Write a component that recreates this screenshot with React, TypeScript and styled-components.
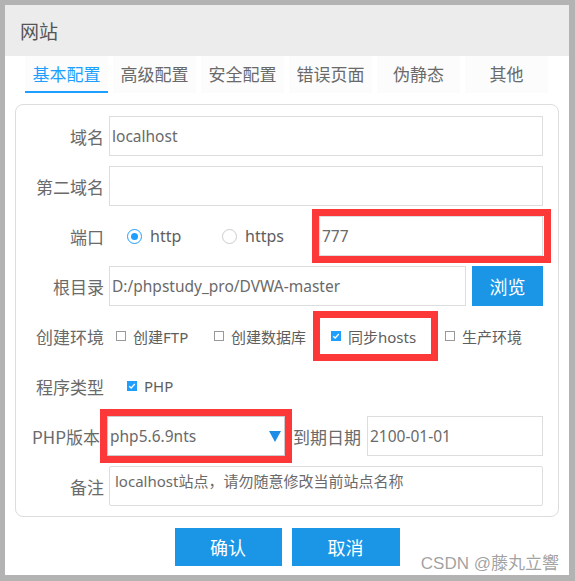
import React from "react";
import styled, { createGlobalStyle } from "styled-components";

const GlobalStyle = createGlobalStyle`
  html, body {
    margin: 0;
    padding: 0;
    background: #b3b3b3;
  }
  body {
    font-family: "Noto Sans", "Noto Sans CJK SC", sans-serif;
    color: #666;
  }
  * {
    box-sizing: border-box;
  }
`;

const tabs = ["基本配置", "高级配置", "安全配置", "错误页面", "伪静态", "其他"];

function Checkbox({ checked }: { checked?: boolean }) {
  return (
    <CheckBox $checked={checked}>
      {checked && (
        <svg width="8" height="8" viewBox="0 0 8 8">
          <path d="M1.2 4.2 L3.2 6 L6.8 2" fill="none" stroke="#fff" strokeWidth="1.3" />
        </svg>
      )}
    </CheckBox>
  );
}

function App() {
  return (
    <>
      <GlobalStyle />
      <Dialog>
        <TitleBar>网站</TitleBar>
        <TabBar>
          {tabs.map((t, i) => (
            <Tab key={t}>
              <TabInner $active={i === 0}>{t}</TabInner>
            </Tab>
          ))}
        </TabBar>

        <Panel>
          <Row>
            <Label>域名</Label>
            <Input>localhost</Input>
          </Row>
          <Row>
            <Label>第二域名</Label>
            <Input />
          </Row>
          <Row>
            <Label>端口</Label>
            <Controls $indent={18}>
              <RadioOption>
                <Radio $checked />
                http
              </RadioOption>
              <RadioOption>
                <Radio />
                https
              </RadioOption>
              <Marked $grow>
                <Input>777</Input>
                <Highlight $t={-7} $r={-8} $b={-7} $l={-7} />
              </Marked>
            </Controls>
          </Row>
          <Row>
            <Label>根目录</Label>
            <Controls>
              <Input $grow>D:/phpstudy_pro/DVWA-master</Input>
              <BlueButton $w={71}>浏览</BlueButton>
            </Controls>
          </Row>
          <Row>
            <Label>创建环境</Label>
            <Controls $indent={7}>
              <CheckOption $w={98}>
                <Checkbox />
                创建FTP
              </CheckOption>
              <CheckOption $w={117}>
                <Checkbox />
                创建数据库
              </CheckOption>
              <Marked>
                <CheckOption $w={114}>
                  <Checkbox checked />
                  同步hosts
                </CheckOption>
                <Highlight $t={-5} $r={7} $b={-5} $l={-18} />
              </Marked>
              <CheckOption>
                <Checkbox />
                生产环境
              </CheckOption>
            </Controls>
          </Row>
          <Row>
            <Label>程序类型</Label>
            <Controls $indent={18}>
              <CheckOption>
                <Checkbox checked />
                PHP
              </CheckOption>
            </Controls>
          </Row>
          <Row>
            <Label $pad={4}>PHP版本</Label>
            <Controls $indent={-2}>
              <Marked>
                <Select>
                  php5.6.9nts
                  <svg width="12" height="11" viewBox="0 0 12 11">
                    <path d="M0 0 H12 L6 11 Z" fill="#1c8ee6" />
                  </svg>
                </Select>
                <Highlight $t={-7} $r={-7} $b={-7} $l={-7} />
              </Marked>
              <InlineLabel>到期日期</InlineLabel>
              <Input $grow>2100-01-01</Input>
            </Controls>
          </Row>
          <Row>
            <Label>备注</Label>
            <TextArea>localhost站点，请勿随意修改当前站点名称</TextArea>
          </Row>
        </Panel>

        <Footer>
          <BlueButton $w={107} $h={38}>确认</BlueButton>
          <BlueButton $w={108} $h={38}>取消</BlueButton>
        </Footer>
        <Watermark>CSDN @藤丸立響</Watermark>
      </Dialog>
    </>
  );
}

const Dialog = styled.div`
  position: relative;
  margin: 5px 0 0 5px;
  width: 564px;
  height: 570px;
  background: #fff;
  display: flex;
  flex-direction: column;
`;

const TitleBar = styled.div`
  height: 51px;
  background: #ececec;
  padding-left: 15px;
  display: flex;
  align-items: center;
  font-size: 19px;
  color: #555;
  font-family: "Noto Sans CJK SC", sans-serif;
`;

const TabBar = styled.div`
  display: flex;
  padding-left: 17px;
  height: 37px;
`;

const Tab = styled.div`
  width: 88px;
  display: flex;
  padding: 0 2px 0 3px;
`;

const TabInner = styled.div<{ $active?: boolean }>`
  flex: 1;
  display: flex;
  align-items: center;
  justify-content: center;
  background: #fcfcfc;
  font-size: 17px;
  font-family: "Noto Sans CJK SC", sans-serif;
  color: ${(p) => (p.$active ? "#1e9fff" : "#6a6a6a")};
  border-bottom: 2px solid ${(p) => (p.$active ? "#1e9fff" : "transparent")};
`;

const Panel = styled.div`
  margin: 11px 10px 0 10px;
  border: 1px solid #ddd;
  border-radius: 8px;
  padding: 11px 15px 10px 0;
  display: flex;
  flex-direction: column;
  gap: 10px;
`;

const Row = styled.div`
  display: grid;
  grid-template-columns: 88px 1fr;
  column-gap: 5px;
  height: 40px;
  align-items: center;
`;

const Label = styled.div<{ $pad?: number }>`
  text-align: right;
  font-size: 17px;
  color: #6a6a6a;
  padding-right: ${(p) => p.$pad || 0}px;
  white-space: nowrap;
  font-family: "Noto Sans CJK SC", sans-serif;
`;

const InlineLabel = styled.div`
  font-size: 17px;
  color: #6a6a6a;
  margin: 0 6px 0 8px;
  white-space: nowrap;
  font-family: "Noto Sans CJK SC", sans-serif;
`;

const Controls = styled.div<{ $indent?: number }>`
  display: flex;
  align-items: center;
  height: 40px;
  margin-left: ${(p) => (p.$indent && p.$indent < 0 ? p.$indent : 0)}px;
  padding-left: ${(p) => (p.$indent && p.$indent > 0 ? p.$indent : 0)}px;
`;

const Input = styled.div<{ $grow?: boolean }>`
  height: 40px;
  ${(p) => (p.$grow ? "flex: 1;" : "width: 100%;")}
  border: 1px solid #ddd;
  padding: 0 2px;
  display: flex;
  align-items: center;
  font-size: 15.5px;
  color: #6a6a6a;
  white-space: nowrap;
`;

const TextArea = styled.div`
  height: 40px;
  border: 1px solid #ddd;
  border-radius: 2px;
  padding: 3px 5px;
  font-size: 15px;
  color: #6a6a6a;
  font-family: "Noto Sans", "Noto Sans CJK SC", sans-serif;
`;

const Select = styled.div`
  width: 178px;
  height: 40px;
  border: 1px solid #ccc;
  padding: 0 3px 0 2px;
  display: flex;
  align-items: center;
  justify-content: space-between;
  font-size: 15.5px;
  color: #6a6a6a;
`;

const Marked = styled.div<{ $grow?: boolean }>`
  position: relative;
  display: flex;
  align-items: center;
  height: 40px;
  ${(p) => (p.$grow ? "flex: 1; margin-left: 2px;" : "")}
`;

const Highlight = styled.div<{ $t: number; $r: number; $b: number; $l: number }>`
  position: absolute;
  top: ${(p) => p.$t}px;
  right: ${(p) => p.$r}px;
  bottom: ${(p) => p.$b}px;
  left: ${(p) => p.$l}px;
  border: 7px solid #fd3838;
  pointer-events: none;
`;

const RadioOption = styled.label`
  width: 95px;
  display: flex;
  align-items: center;
  gap: 8px;
  font-size: 16px;
  color: #5e5e5e;
`;

const Radio = styled.span<{ $checked?: boolean }>`
  width: 15px;
  height: 15px;
  border-radius: 50%;
  border: 1px solid ${(p) => (p.$checked ? "#1e9fff" : "#ccc")};
  display: flex;
  align-items: center;
  justify-content: center;
  &::after {
    content: "";
    width: 7px;
    height: 7px;
    border-radius: 50%;
    background: ${(p) => (p.$checked ? "#1e9fff" : "transparent")};
  }
`;

const CheckOption = styled.label<{ $w?: number }>`
  ${(p) => (p.$w ? `width: ${p.$w}px;` : "")}
  display: flex;
  align-items: center;
  gap: 7px;
  font-size: 15px;
  color: #5e5e5e;
  white-space: nowrap;
`;

const CheckBox = styled.span<{ $checked?: boolean }>`
  width: 10px;
  height: 10px;
  flex-shrink: 0;
  border: 1px solid ${(p) => (p.$checked ? "#1e9fff" : "#999")};
  background: ${(p) => (p.$checked ? "#1e9fff" : "#fff")};
  display: flex;
  align-items: center;
  justify-content: center;
`;

const BlueButton = styled.div<{ $w: number; $h?: number }>`
  width: ${(p) => p.$w}px;
  height: ${(p) => p.$h || 40}px;
  margin-left: ${(p) => (p.$h ? 0 : 6)}px;
  background: #1b96e6;
  color: #fff;
  font-size: 18px;
  display: flex;
  align-items: center;
  justify-content: center;
  font-family: "Noto Sans CJK SC", sans-serif;
`;

const Footer = styled.div`
  display: flex;
  justify-content: center;
  gap: 10px;
  margin-top: 11px;
`;

const Watermark = styled.div`
  position: absolute;
  right: 10px;
  bottom: 1px;
  font-family: "Liberation Sans", "Noto Sans CJK SC", sans-serif;
  font-size: 17px;
  color: rgba(120, 120, 120, 0.7);
`;

export default App;
